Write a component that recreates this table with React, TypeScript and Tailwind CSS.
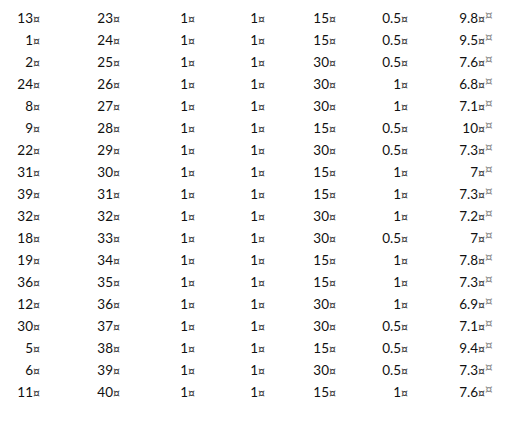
const rows: string[][] = [
  ["13", "23", "1", "1", "15", "0.5", "9.8"],
  ["1", "24", "1", "1", "15", "0.5", "9.5"],
  ["2", "25", "1", "1", "30", "0.5", "7.6"],
  ["24", "26", "1", "1", "30", "1", "6.8"],
  ["8", "27", "1", "1", "30", "1", "7.1"],
  ["9", "28", "1", "1", "15", "0.5", "10"],
  ["22", "29", "1", "1", "30", "0.5", "7.3"],
  ["31", "30", "1", "1", "15", "1", "7"],
  ["39", "31", "1", "1", "15", "1", "7.3"],
  ["32", "32", "1", "1", "30", "1", "7.2"],
  ["18", "33", "1", "1", "30", "0.5", "7"],
  ["19", "34", "1", "1", "15", "1", "7.8"],
  ["36", "35", "1", "1", "15", "1", "7.3"],
  ["12", "36", "1", "1", "30", "1", "6.9"],
  ["30", "37", "1", "1", "30", "0.5", "7.1"],
  ["5", "38", "1", "1", "15", "0.5", "9.4"],
  ["6", "39", "1", "1", "30", "0.5", "7.3"],
  ["11", "40", "1", "1", "15", "1", "7.6"],
];

export default function App() {
  return (
    <div
      className="w-[524px] h-[422px] bg-white text-[#111] pt-[7px]"
      style={{ fontFamily: "Lato, 'Open Sans', sans-serif" }}
    >
      {rows.map((row, i) => (
        <div
          key={i}
          className="grid grid-cols-[40px_80px_75px_70px_71px_72px_77px_20px] h-[22px] items-center text-[13.5px] leading-[22px]"
        >
          {row.map((cell, j) => (
            <div key={j} className="text-right whitespace-nowrap">
              {cell}
              <span className="font-['DejaVu_Sans',sans-serif] text-[11px] text-[#333]">
                ¤
              </span>
            </div>
          ))}
          <div className="text-left font-['DejaVu_Sans',sans-serif] text-[12px] leading-none text-[#888] -translate-y-[4px]">
            ¤
          </div>
        </div>
      ))}
    </div>
  );
}
